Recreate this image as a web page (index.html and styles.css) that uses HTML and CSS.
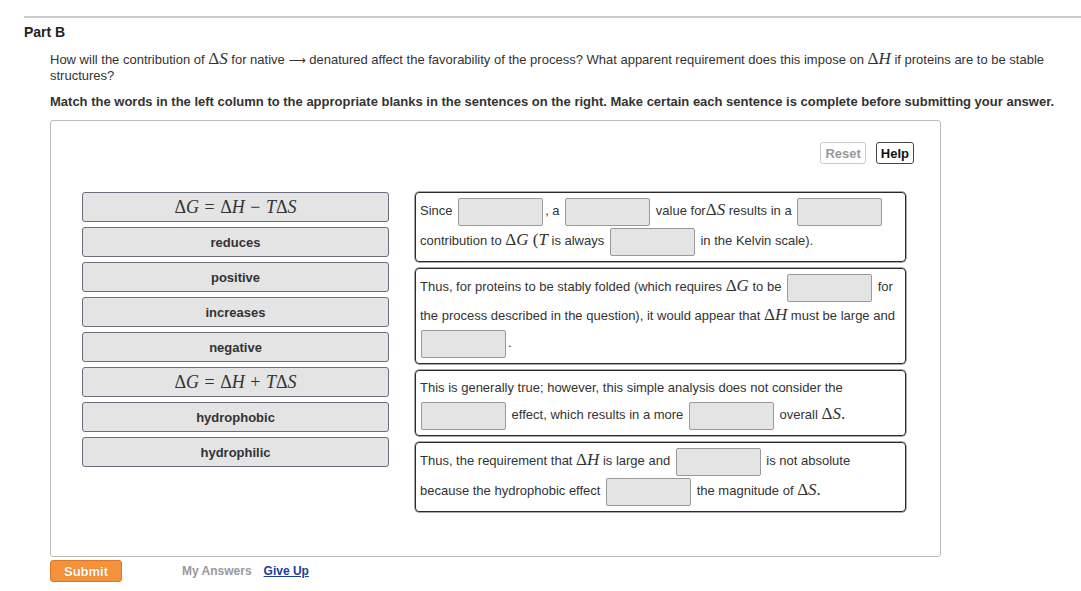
FILE: index.html
```html
<!DOCTYPE html>
<html>
  <head>
    <title>Part B</title>
    <link rel="stylesheet" href="styles.css">
  </head>
  <body>
    <div class="part">
      <h2 class="part-title">Part B</h2>
      <div class="part-body">
        <p class="question">
          How will the contribution of <span class="m">&Delta;<i>S</i></span> for native <span class="arrow">&#x27F6;</span> denatured affect the favorability of the process? What apparent requirement does this impose on <span class="m">&Delta;<i>H</i></span> if proteins are to be stable structures?
        </p>
        <p class="instructions">
          Match the words in the left column to the appropriate blanks in the sentences on the right. Make certain each sentence is complete before submitting your answer.
        </p>

        <div class="panel">
          <div class="toolbar">
            <button class="tool-btn disabled">Reset</button>
            <button class="tool-btn">Help</button>
          </div>

          <div class="match">
            <div class="words">
              <div class="word"><span class="m big">&Delta;<i>G</i> = &Delta;<i>H</i> &minus; <i>T</i>&Delta;<i>S</i></span></div>
              <div class="word">reduces</div>
              <div class="word">positive</div>
              <div class="word">increases</div>
              <div class="word">negative</div>
              <div class="word"><span class="m big">&Delta;<i>G</i> = &Delta;<i>H</i> + <i>T</i>&Delta;<i>S</i></span></div>
              <div class="word">hydrophobic</div>
              <div class="word">hydrophilic</div>
            </div>

            <div class="sentences">
              <div class="sentence">
                Since <span class="blank"></span>, a <span class="blank"></span> value for<span class="m">&Delta;<i>S</i></span> results in a <span class="blank"></span>
                contribution to <span class="m">&Delta;<i>G</i> (<i>T</i></span> is always <span class="blank"></span> in the Kelvin scale).
              </div>
              <div class="sentence">
                Thus, for proteins to be stably folded (which requires <span class="m">&Delta;<i>G</i></span> to be <span class="blank"></span> for
                the process described in the question), it would appear that <span class="m">&Delta;<i>H</i></span> must be large and
                <span class="blank first"></span>.
              </div>
              <div class="sentence">
                This is generally true; however, this simple analysis does not consider the
                <span class="blank first"></span> effect, which results in a more <span class="blank"></span> overall <span class="m">&Delta;<i>S</i>.</span>
              </div>
              <div class="sentence">
                Thus, the requirement that <span class="m">&Delta;<i>H</i></span> is large and <span class="blank"></span> is not absolute
                <br>because the hydrophobic effect <span class="blank"></span> the magnitude of <span class="m">&Delta;<i>S</i>.</span>
              </div>
            </div>
          </div>
        </div>

        <div class="actions">
          <button class="submit">Submit</button>
          <span class="my-answers">My Answers</span>
          <a class="give-up" href="#">Give Up</a>
        </div>
      </div>
    </div>
  </body>
</html>
```

FILE: styles.css
```css
body {
  margin: 0;
  font-family: "Liberation Sans", Arial, sans-serif;
  font-size: 13px;
  color: #333;
  background: #fff;
}
.part {
  margin: 16px 0 0 24px;
  border-top: 2px solid #ccc;
}
.part-title {
  margin: 6px 0 0;
  font-size: 14px;
  line-height: 16px;
  font-weight: bold;
  color: #222;
}
.part-body {
  padding-left: 26px;
}
.question {
  margin: 12px 0 0;
  line-height: 16px;
  width: 1010px;
}
.instructions {
  margin: 10px 0 0;
  line-height: 16px;
  font-weight: bold;
}
.m {
  font-family: "Liberation Serif", "Times New Roman", serif;
  font-size: 17px;
  font-weight: normal;
  line-height: 0;
}
.m.big {
  font-size: 18px;
  word-spacing: 1px;
}
.arrow {
  font-family: "DejaVu Sans", sans-serif;
  font-size: 12px;
  line-height: 0;
}
.panel {
  margin-top: 10px;
  width: 891px;
  box-sizing: border-box;
  height: 437px;
  border: 1px solid #bbb;
  border-radius: 3px;
  padding: 21px 26px 0 31px;
}
.toolbar {
  display: flex;
  justify-content: flex-end;
  gap: 10px;
}
.tool-btn {
  height: 22px;
  padding: 0 4px;
  font-family: "Liberation Sans", Arial, sans-serif;
  font-size: 13px;
  font-weight: bold;
  color: #111;
  background: #fff;
  border: 1px solid #444;
  border-radius: 3px;
}
.tool-btn.disabled {
  color: #999;
  border-color: #ccc;
}
.match {
  display: flex;
  margin-top: 28px;
  gap: 26px;
}
.words {
  width: 307px;
  display: flex;
  flex-direction: column;
  gap: 5px;
}
.word {
  height: 30px;
  box-sizing: border-box;
  display: flex;
  align-items: center;
  justify-content: center;
  background: #e4e4e4;
  border: 1px solid #6b6d7a;
  border-radius: 3px;
  font-weight: bold;
  color: #333;
}
.word .m {
  line-height: 1;
}
.sentences {
  width: 491px;
  display: flex;
  flex-direction: column;
  gap: 6px;
}
.sentence {
  border: 1px solid #2a2a2a;
  box-shadow: 0 0 0 0.5px #555;
  border-radius: 4px;
  padding: 4px;
  line-height: 26px;
  color: #333;
}
.blank {
  display: inline-block;
  width: 85px;
  height: 28px;
  box-sizing: border-box;
  margin: 1px 2px;
  vertical-align: middle;
  background: #e4e4e4;
  border: 1px solid #999;
  border-radius: 2px;
}
.blank.first {
  margin-left: 1px;
}
.actions {
  display: flex;
  align-items: center;
  margin-top: 3px;
}
.submit {
  width: 72px;
  height: 22px;
  background: #f3923a;
  border: 1px solid #d9782a;
  border-radius: 3px;
  color: #fff;
  font-family: "Liberation Sans", Arial, sans-serif;
  font-size: 13px;
  font-weight: bold;
  text-shadow: 0 0 1px #b85e10;
}
.my-answers {
  margin-left: 60px;
  font-size: 12px;
  font-weight: bold;
  color: #999;
}
.give-up {
  margin-left: 12px;
  font-size: 12px;
  font-weight: bold;
  color: #1a3f9a;
}
```
